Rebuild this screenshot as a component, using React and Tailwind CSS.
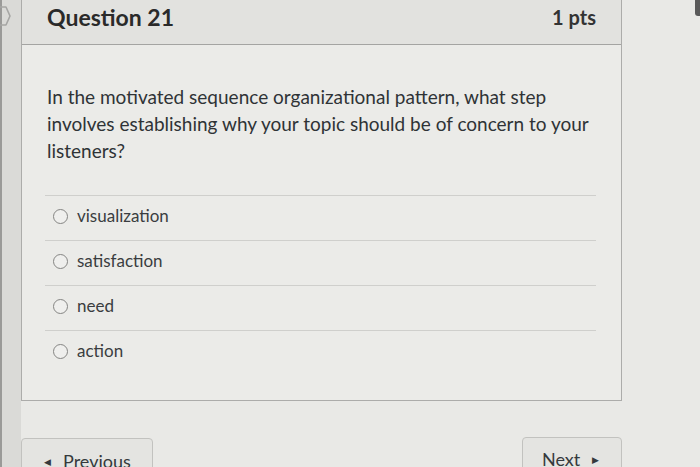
export default function App() {
  const answers = ["visualization", "satisfaction", "need", "action"];
  return (
    <div className="relative flex w-[700px] h-[467px] overflow-hidden bg-[#e9e9e6]" style={{ fontFamily: "Lato, 'Open Sans', sans-serif" }}>
      <div className="relative w-[21px] shrink-0 bg-[#dadad7] border-l-2 border-[#9a9a98]">
        <svg className="absolute left-[-4px] top-[5px]" width="14" height="22" viewBox="0 0 14 22">
          <path d="M1 2 L8 2 L12 11 L8 20 L1 20" fill="none" stroke="#a6a6a4" strokeWidth="1.6" strokeLinejoin="round" />
        </svg>
      </div>
      <div className="flex flex-col w-[601px] shrink-0">
        <div className="flex flex-col shrink-0 h-[401px] border border-t-0 border-[#acacaa] bg-[#ebebe8]">
          <div className="flex items-center justify-between shrink-0 h-[45px] px-[25px] pb-[10px] bg-[#e2e2df] border-b border-[#a4a4a2]">
            <span className="text-[23px] font-bold text-[#2a2a2a]">Question 21</span>
            <span className="text-[20px] font-bold text-[#333333]">1 pts</span>
          </div>
          <div className="px-[25px] pt-[38px] text-[19px] leading-[27px] text-[#2f3336]">
            In the motivated sequence organizational pattern, what step<br />
            involves establishing why your topic should be of concern to your<br />
            listeners?
          </div>
          <div className="mt-[31px] ml-[23px] mr-[25px] flex flex-col">
            {answers.map((a) => (
              <div key={a} className="flex items-center h-[45px] border-t border-[#cfcfcc] pl-[8px] pb-[4px]">
                <span className="w-[15px] h-[15px] rounded-full border-[1.5px] border-[#858583] bg-[#efefed]"></span>
                <span className="ml-[9px] text-[17px] text-[#3a3d40]">{a}</span>
              </div>
            ))}
          </div>
        </div>
        <div className="flex justify-between items-start mt-[36px]">
          <div className="flex items-center shrink-0 h-[44px] w-[132px] pl-[22px] pt-[3px] rounded-t-[4px] border border-[#c2c2bf] bg-[#e4e4e1] text-[18px] text-[#35393c] mt-[1px]">
            <span className="text-[9px] mr-[12px]">◀</span>Previous
          </div>
          <div className="flex items-center shrink-0 h-[44px] w-[100px] pl-[19px] pt-[1px] rounded-t-[4px] border border-[#c2c2bf] bg-[#e4e4e1] text-[18px] text-[#35393c]">
            Next<span className="text-[9px] ml-[12px]">▶</span>
          </div>
        </div>
      </div>
      <div className="absolute right-[-6px] top-[-4px] w-[11px] h-[20px] rounded-[3px] bg-[#5a5a5a]"></div>
    </div>
  );
}
